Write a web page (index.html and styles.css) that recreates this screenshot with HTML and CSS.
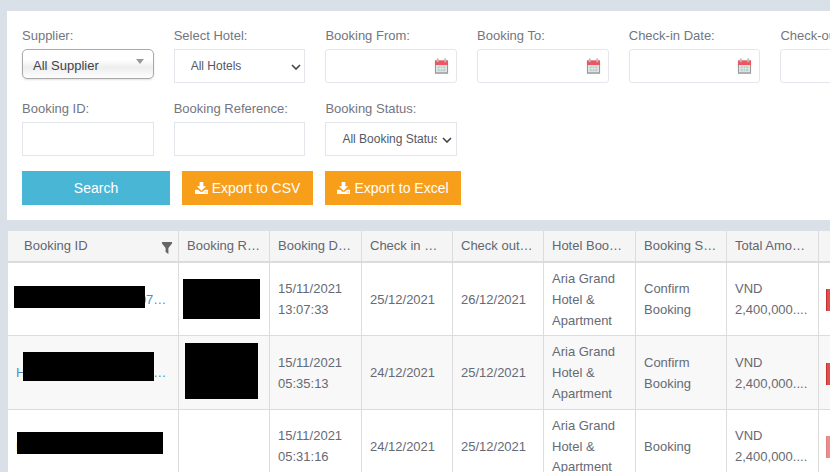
FILE: index.html
```html
<!DOCTYPE html>
<html lang="en">
<head>
<meta charset="utf-8">
<title>Bookings</title>
<link rel="stylesheet" href="styles.css">
</head>
<body>
<svg class="defs" width="0" height="0" aria-hidden="true">
  <symbol id="cal" viewBox="0 0 16 16">
    <rect x="1" y="2" width="14" height="14" fill="#dfe5e3"/>
    <rect x="1" y="2" width="14" height="5" fill="#ee5560"/>
    <rect x="1" y="15" width="14" height="1" fill="#6d6d6d"/>
    <rect x="1" y="7" width="1" height="8" fill="#8a8f8d"/>
    <rect x="14" y="7" width="1" height="8" fill="#8a8f8d"/>
    <rect x="3" y="0" width="2" height="4" fill="#b9b9b9"/>
    <rect x="11" y="0" width="2" height="4" fill="#b9b9b9"/>
    <path d="M4 8.500h8v5H4z" fill="#b7cbc9"/>
    <path d="M4 10.800h8M6.600 8.500v5M9.300 8.500v5" stroke="#f0f4f3" stroke-width=".7"/>
  </symbol>
  <symbol id="dl" viewBox="0 0 14 13">
    <path d="M5 0h4v4.500h3L7 9.500 2 4.500h3z" fill="#fff"/>
    <path d="M0 8.500h3.500L5.600 10.500h2.800L10.500 8.500H14V13H0z" fill="#fff"/>
    <rect x="10.300" y="10.300" width="1" height="1" fill="#f79e1b"/>
    <rect x="12" y="10.300" width="1" height="1" fill="#f79e1b"/>
  </symbol>
  <symbol id="chev" viewBox="0 0 10 6">
    <path d="M1 1l4 4 4-4" fill="none" stroke="#444" stroke-width="1.600"/>
  </symbol>
</svg>
<main class="page">
  <section class="panel">
    <form class="filters">
      <div class="field">
        <label class="label">Supplier:</label>
        <div class="fake-select"><span>All Supplier</span><i class="tri"></i></div>
      </div>
      <div class="field">
        <label class="label">Select Hotel:</label>
        <div class="sel-wrap">
          <select class="sel"><option>All Hotels</option></select>
          <svg class="chev"><use href="#chev"/></svg>
        </div>
      </div>
      <div class="field">
        <label class="label">Booking From:</label>
        <div class="date"><svg class="cal"><use href="#cal"/></svg></div>
      </div>
      <div class="field">
        <label class="label">Booking To:</label>
        <div class="date"><svg class="cal"><use href="#cal"/></svg></div>
      </div>
      <div class="field">
        <label class="label">Check-in Date:</label>
        <div class="date"><svg class="cal"><use href="#cal"/></svg></div>
      </div>
      <div class="field">
        <label class="label">Check-out Date:</label>
        <div class="date"><svg class="cal"><use href="#cal"/></svg></div>
      </div>
      <div class="field">
        <label class="label">Booking ID:</label>
        <input class="input" type="text">
      </div>
      <div class="field">
        <label class="label">Booking Reference:</label>
        <input class="input" type="text">
      </div>
      <div class="field">
        <label class="label">Booking Status:</label>
        <div class="sel-wrap">
          <select class="sel sel-narrow"><option>All Booking Status</option></select>
          <svg class="chev chev-narrow"><use href="#chev"/></svg>
        </div>
      </div>
    </form>
    <div class="actions">
      <button class="btn btn-search" type="button">Search</button>
      <button class="btn btn-export btn-csv" type="button"><svg class="dl"><use href="#dl"/></svg>Export to CSV</button>
      <button class="btn btn-export btn-xls" type="button"><svg class="dl"><use href="#dl"/></svg>Export to Excel</button>
    </div>
  </section>

  <section class="grid-wrap">
    <table class="grid">
      <colgroup>
        <col class="c-id"><col class="c-b"><col class="c-a"><col class="c-b"><col class="c-b"><col class="c-a"><col class="c-b"><col class="c-a"><col class="c-act">
      </colgroup>
      <thead>
        <tr>
          <th class="th-id">Booking ID<svg class="funnel" viewBox="0 0 10 12"><path d="M0 0h10v1.500L6.400 6v6L3.600 10V6L0 1.500z" fill="#666"/></svg></th>
          <th>Booking R…</th>
          <th>Booking D…</th>
          <th>Check in …</th>
          <th>Check out…</th>
          <th>Hotel Boo…</th>
          <th>Booking S…</th>
          <th>Total Amo…</th>
          <th></th>
        </tr>
      </thead>
      <tbody>
        <tr>
          <td class="td-id"><a class="link">HB00000000/00000007…</a></td>
          <td></td>
          <td>15/11/2021<br>13:07:33</td>
          <td>25/12/2021</td>
          <td>26/12/2021</td>
          <td>Aria Grand<br>Hotel &amp;<br>Apartment</td>
          <td>Confirm<br>Booking</td>
          <td>VND<br>2,400,000....</td>
          <td class="td-act"><i class="act"></i></td>
        </tr>
        <tr class="alt">
          <td class="td-id"><a class="link">HB00000000/00000006…</a></td>
          <td></td>
          <td>15/11/2021<br>05:35:13</td>
          <td>24/12/2021</td>
          <td>25/12/2021</td>
          <td>Aria Grand<br>Hotel &amp;<br>Apartment</td>
          <td>Confirm<br>Booking</td>
          <td>VND<br>2,400,000....</td>
          <td class="td-act"><i class="act"></i></td>
        </tr>
        <tr>
          <td class="td-id"><a class="link link-warn">HB0000000/00000005</a></td>
          <td></td>
          <td>15/11/2021<br>05:31:16</td>
          <td>24/12/2021</td>
          <td>25/12/2021</td>
          <td>Aria Grand<br>Hotel &amp;<br>Apartment</td>
          <td>Booking</td>
          <td>VND<br>2,400,000....</td>
          <td class="td-act"><i class="act act-pale"></i></td>
        </tr>
      </tbody>
    </table>
    <div class="mask m1"></div>
    <div class="mask m2"></div>
    <div class="mask m3"></div>
    <div class="mask m4"></div>
    <div class="mask m5"></div>
  </section>
</main>
</body>
</html>
```
FILE: styles.css
```css
* { box-sizing: border-box; }
html, body { margin: 0; height: 100%; overflow: hidden; }
body {
  background: #d9e0e8;
  font-family: "Liberation Sans", Arial, sans-serif;
  font-size: 13px;
  color: #6b6f7a;
}
.defs { position: absolute; }
.page { width: 1000px; padding-top: 11px; }

.panel {
  margin-left: 7px;
  background: #fff;
  padding: 15px;
  height: 209px;
}
.filters {
  display: grid;
  grid-template-columns: repeat(6, 131.5px);
  column-gap: 20.2px;
  row-gap: 16px;
}
.field { display: flex; flex-direction: column; }
.label { height: 23px; line-height: 19px; color: #73767f; }
.fake-select {
  height: 30px;
  width: 132px;
  border: 1px solid #a8a8a8;
  border-radius: 5px;
  background: linear-gradient(#fff 0%, #fff 35%, #eeeeee 62%, #fdfdfd 100%);
  box-shadow: 0 1px 2px rgba(0,0,0,.12);
  padding: 2px 0 0 10px;
  display: flex;
  align-items: center;
  justify-content: space-between;
  font-size: 13px;
  color: #3f434c;
}
.tri {
  width: 0; height: 0;
  border-left: 4px solid transparent;
  border-right: 4px solid transparent;
  border-top: 5px solid #999;
  margin: 0 9px 7px 0;
}
.sel-wrap { position: relative; height: 34px; }
.sel {
  width: 100%;
  height: 34px;
  appearance: none;
  background: #fff;
  border: 1px solid #e3e7ec;
  border-radius: 0;
  padding: 0 24px 0 16px;
  font: 12px "Liberation Sans", Arial, sans-serif;
  color: #555862;
  outline: 0;
}
.sel-narrow { padding: 0 19px 0 16px; }
.chev { position: absolute; width: 10px; height: 6px; right: 4px; top: 15px; }
.chev-narrow { right: 5px; }
.date {
  height: 34px;
  border: 1px solid #e3e7ec;
  border-radius: 3px;
  background: #fff;
  display: flex;
  align-items: center;
  justify-content: flex-end;
  padding-right: 7px;
}
.cal { width: 15px; height: 16px; }
.input {
  height: 34px;
  width: 100%;
  border: 1px solid #e3e7ec;
  border-radius: 0;
  background: #fff;
  outline: 0;
}

.actions { display: flex; margin-top: 15px; }
.btn {
  height: 34px;
  border: 0;
  padding: 0;
  color: #fff;
  font: 14px "Liberation Sans", Arial, sans-serif;
  display: flex;
  align-items: center;
  justify-content: center;
}
.btn-search { width: 148px; background: #4ab6d6; }
.btn-export { background: #f79e1b; }
.btn-csv { width: 131px; margin-left: 12px; }
.btn-xls { width: 136px; margin-left: 12px; }
.dl { width: 13px; height: 12px; margin-right: 4px; }

.grid-wrap { position: relative; margin: 11px 0 0 8px; }
.grid {
  border-collapse: separate;
  border-spacing: 0;
  table-layout: fixed;
  width: 901px;
  background: #fff;
}
.c-id { width: 171px; }
.c-a { width: 92px; }
.c-b { width: 91px; }
.c-act { width: 90px; }
th, td {
  border-right: 1px solid #dcdcdc;
  text-align: left;
  font-weight: 400;
}
td { padding: 6px 8px 4px; }
th {
  height: 32px;
  background: #f5f5f5;
  border-bottom: 2px solid #dcdcdc;
  color: #62666f;
  font-size: 13px;
  padding: 0 8px 2px;
  white-space: nowrap;
  position: relative;
}
.th-id { padding-left: 16px; }
.funnel { position: absolute; right: 6px; top: 11px; width: 10px; height: 12px; }
td {
  border-bottom: 1px solid #dcdcdc;
  line-height: 20.8px;
  color: #666a74;
  font-size: 13px;
  vertical-align: middle;
}
.alt td { background: #f8f8f8; }
.td-id { overflow: hidden; white-space: nowrap; }
.link { color: #4a90d0; }
.link-warn { color: #e08a3c; }
.td-act { padding-left: 7px; }
.act { display: block; width: 30px; height: 22px; background: #dc5150; border-left: 1px solid #c9302c; }
.act-pale { background: #e98e8e; border-left-color: #e38080; }

.mask { position: absolute; background: #000; }
.m1 { left: 6px; top: 55px; width: 131px; height: 22px; }
.m2 { left: 175px; top: 48px; width: 77px; height: 40px; }
.m3 { left: 15px; top: 121px; width: 131px; height: 29px; }
.m4 { left: 177px; top: 112px; width: 73px; height: 56px; }
.m5 { left: 9px; top: 201px; width: 146px; height: 22px; }
```
